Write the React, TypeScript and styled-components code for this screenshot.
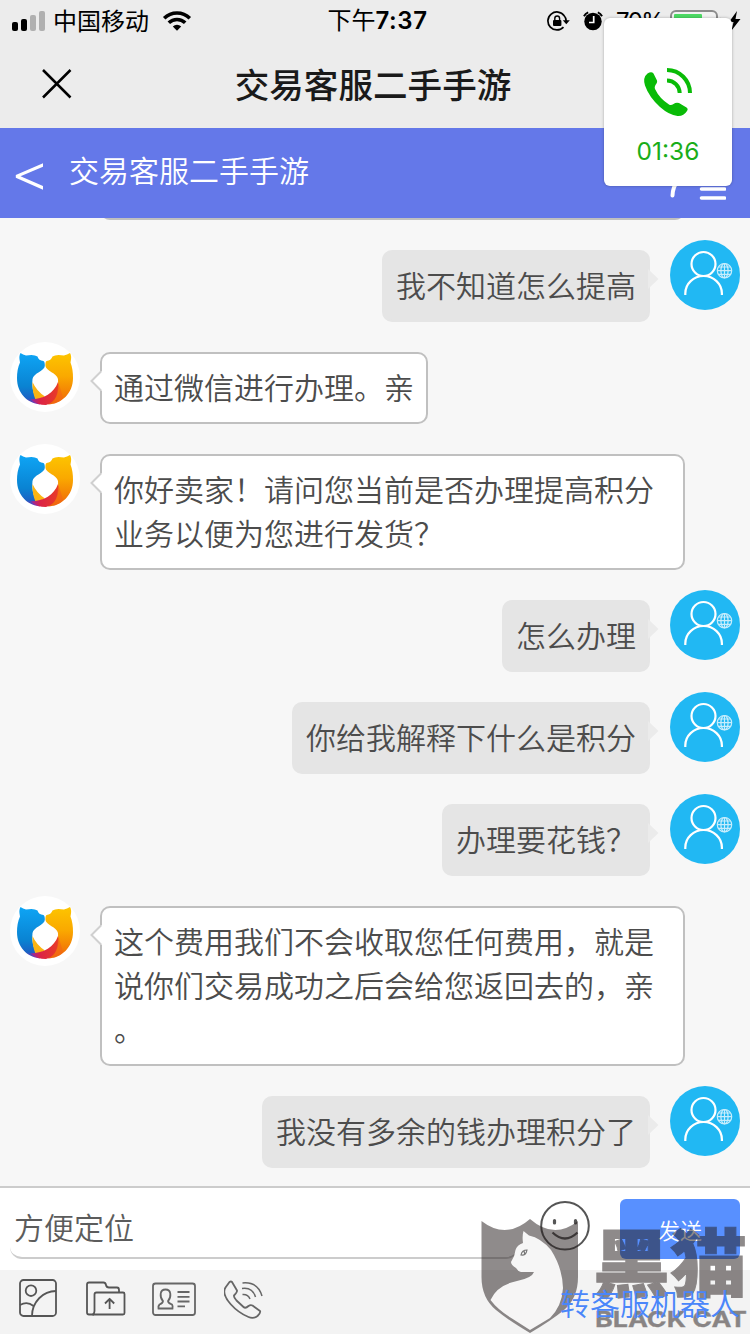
import React from "react";
import styled, { createGlobalStyle } from "styled-components";

const Global = createGlobalStyle`
  * { box-sizing: border-box; }
  body {
    margin: 0;
    font-family: Inter, "Noto Sans CJK SC", sans-serif;
    background: #f7f7f7;
  }
  svg { display: block; flex: none; }
`;

const Screen = styled.div`
  position: relative;
  width: 750px;
  height: 1334px;
  display: flex;
  flex-direction: column;
  overflow: hidden;
  background: #f7f7f7;
`;

const StatusBar = styled.div`
  height: 40px;
  flex: none;
  display: grid;
  grid-template-columns: 1fr auto 1fr;
  align-items: center;
  padding: 0 9px 0 12px;
  background: #ececec;
  color: #000;
  font-size: 24px;
  line-height: 40px;
`;

const StatusGroup = styled.div<{ $end?: boolean }>`
  display: flex;
  align-items: center;
  justify-content: ${(p) => (p.$end ? "flex-end" : "flex-start")};
`;

const Carrier = styled.span`
  margin: 0 13px 0 7px;
  padding-top: 1px;
  line-height: 39px;
`;

const Clock = styled.span`
  padding-left: 2px;
  line-height: 40px;
`;

const ClockDigits = styled.span`
  font-weight: 600;
  letter-spacing: 0.6px;
`;

const Percent = styled.span`
  width: 45px;
  margin: 2px 9px 0 13px;
  font-size: 24px;
  letter-spacing: -1.5px;
`;

const NavBar = styled.div`
  height: 88px;
  flex: none;
  display: grid;
  grid-template-columns: 72px 1fr 117px;
  align-items: center;
  padding-left: 41px;
  background: #ececec;
`;

const NavTitle = styled.h1`
  margin: 0;
  padding-top: 2px;
  text-align: center;
  font-size: 34.6px;
  font-weight: 500;
  line-height: 86px;
  color: #1a1a1a;
`;

const ChatHeader = styled.div`
  height: 90px;
  flex: none;
  display: flex;
  align-items: center;
  padding: 0 24px 0 15px;
  background: #6478e9;
  color: #fff;
`;

const HeaderTitle = styled.div`
  flex: 1;
  margin: -4px 0 0 24px;
  font-size: 30px;
  font-weight: 350;
  line-height: 44px;
`;

const Messages = styled.div`
  flex: 1;
  min-height: 0;
  overflow: hidden;
  display: flex;
  flex-direction: column;
  gap: 20px;
  padding: 0 10px;
`;

const PreviousBubble = styled.div`
  flex: none;
  width: 585px;
  height: 40px;
  margin: -38px 0 0 90px;
  border: 2px solid #c0c0c0;
  border-radius: 10px;
  background: #fff;
`;

const MessageRow = styled.div<{ $mine: boolean }>`
  flex: none;
  display: flex;
  flex-direction: ${(p) => (p.$mine ? "row-reverse" : "row")};
  align-items: flex-start;
  gap: 20px;
`;

const Bubble = styled.div<{ $mine: boolean; $wide?: boolean }>`
  position: relative;
  margin-top: 10px;
  width: ${(p) => (p.$wide ? "585px" : "auto")};
  padding: 10px 12px 14px;
  border: 2px solid ${(p) => (p.$mine ? "#e5e5e5" : "#c0c0c0")};
  border-radius: 10px;
  background: ${(p) => (p.$mine ? "#e5e5e5" : "#fff")};
  color: #4c4c4c;
  font-family: "Noto Sans CJK SC", sans-serif;
  font-size: 30px;
  font-weight: 350;
  line-height: 44px;
  white-space: pre;
`;

const Pointer = styled.svg<{ $mine: boolean }>`
  position: absolute;
  top: 16px;
  ${(p) => (p.$mine ? "right: -12px;" : "left: -12px;")}
`;

const Composer = styled.div`
  height: 84px;
  flex: none;
  display: flex;
  align-items: flex-start;
  padding: 11px 10px 0;
  border-top: 2px solid #ccc;
  background: #fff;
`;

const InputBox = styled.div`
  width: 508px;
  height: 60px;
  padding-left: 4px;
  border-bottom: 2px solid #ccc;
  border-radius: 12px;
  font-family: "Noto Sans CJK SC", sans-serif;
  font-size: 30px;
  font-weight: 350;
  line-height: 54px;
  color: #5c5c5c;
`;

const SmileButton = styled.div`
  margin: 2px 30px 0 22px;
`;

const SendButton = styled.div`
  width: 120px;
  height: 60px;
  border-radius: 6px;
  background: #5890ff;
  color: #fff;
  text-align: center;
  font-size: 22px;
  font-weight: 350;
  line-height: 64px;
`;

const ToolBar = styled.div`
  height: 64px;
  flex: none;
  display: flex;
  align-items: flex-start;
  padding: 8px 10px 0 18px;
  background: #f3f3f3;
`;

const ToolIcons = styled.div`
  flex: 1;
  display: flex;
  gap: 26px;
`;

const RobotLink = styled.div`
  position: relative;
  z-index: 3;
  font-family: "Noto Sans CJK SC", sans-serif;
  font-size: 30px;
  font-weight: 350;
  line-height: 48px;
  color: #4a86fa;
`;

const CallCard = styled.div`
  position: absolute;
  z-index: 4;
  top: 18px;
  left: 604px;
  width: 128px;
  height: 168px;
  display: flex;
  flex-direction: column;
  align-items: center;
  padding-top: 42px;
  border-radius: 6px;
  background: #fff;
  box-shadow: 0 0 3px rgba(0, 0, 0, 0.3);
`;

const CallTime = styled.div`
  margin-top: 11px;
  font-size: 24.5px;
  line-height: 32px;
  color: #1aad19;
`;

const Watermark = styled.svg`
  position: absolute;
  z-index: 2;
  left: 480px;
  top: 1214px;
`;

const Signal = () => (
  <svg width="34" height="20" viewBox="0 0 34 20">
    <rect x="0" y="11" width="6" height="9" rx="2" />
    <rect x="9" y="8" width="6" height="12" rx="2" />
    <rect x="18" y="4" width="6" height="16" rx="2" fill="#b0b0b0" />
    <rect x="27" y="0" width="6" height="20" rx="2" fill="#b0b0b0" />
  </svg>
);

const Wifi = () => (
  <svg width="30" height="20" viewBox="0 0 30 20">
    <g fill="none" stroke="#000" strokeWidth="3.6">
      <path d="M2.200 7.200a18.200 18.200 0 0 1 25.600 0" />
      <path d="M6.800 11.800a11.700 11.700 0 0 1 16.400 0" />
    </g>
    <path d="M15 19.800l-4.200-4.300a6 6 0 0 1 8.400 0z" />
  </svg>
);

const RotationLock = () => (
  <svg width="23" height="20" viewBox="0 0 23 20">
    <path d="M17.200 4.700A9 9 0 1 0 16.500 16.100" fill="none" stroke="#000" strokeWidth="1.700" />
    <path d="M17 4.500q2.200 2.200 2.300 6" fill="none" stroke="#000" strokeWidth="1.700" />
    <path d="M15.800 9.300h7l-3.500 4z" />
    <rect x="6" y="9" width="8.400" height="6" rx="1" />
    <path d="M7.800 9.500V7.400a2.400 2.400 0 0 1 4.800 0v2.100" fill="none" stroke="#000" strokeWidth="1.400" />
  </svg>
);

const AlarmIcon = styled.svg`
  margin-left: 13px;
`;

const Alarm = () => (
  <AlarmIcon width="20" height="20" viewBox="0 0 20 20">
    <circle cx="10" cy="10.500" r="8.700" />
    <path d="M1 5.200A8 8 0 0 1 5.200 1.400M19 5.200A8 8 0 0 0 14.800 1.400" fill="none" stroke="#000" strokeWidth="2" />
    <path d="M10.700 5v6.500H6" fill="none" stroke="#fff" strokeWidth="1.700" />
  </AlarmIcon>
);

const Battery = () => (
  <svg width="71" height="24" viewBox="0 0 71 24">
    <rect x="1" y="2" width="46" height="20" rx="5" fill="#fff" fillOpacity=".3" stroke="#8c8c8c" strokeWidth="2" />
    <rect x="4" y="5" width="28" height="14" rx="1" fill="#4cd964" />
    <path d="M50 8.500q3 3.500 0 7z" fill="#8c8c8c" />
    <path d="M67 2L59 13h4.500L61.500 21.500 70.500 10h-5z" />
  </svg>
);

const Close = () => (
  <svg width="32" height="32" viewBox="0 0 32 32" fill="none" stroke="#000" strokeWidth="2.500">
    <path d="M2 2l27.500 27.500M29.500 2L2 29.500" />
  </svg>
);

const BackIcon = styled.svg`
  margin-top: 7px;
`;

const Back = () => (
  <BackIcon width="30" height="30" viewBox="0 0 30 30" fill="#fff">
    <path d="M28 1.200v3.600L5.500 14.300 28 24v3.800L.8 15.700v-2.800z" />
  </BackIcon>
);

const HeaderToolsIcon = styled.svg`
  margin-top: 28px;
`;

const HeaderTools = () => (
  <HeaderToolsIcon width="58" height="34" viewBox="0 0 58 34" fill="none" stroke="#fff" strokeLinecap="round">
    <path d="M4.500 25.500C5 14 12 5 24 4" strokeWidth="4" />
    <path d="M33.500 10h23M33.500 19h23M33.500 28h23" strokeWidth="3.600" />
  </HeaderToolsIcon>
);

const AgentAvatar = () => (
  <svg width="70" height="70" viewBox="0 0 70 70">
    <defs>
      <linearGradient id="agentBlue" x1="0" y1="0" x2="0" y2="1">
        <stop offset="0" stopColor="#0ea5f5" />
        <stop offset=".65" stopColor="#0a83d2" />
        <stop offset=".88" stopColor="#1b62c4" />
        <stop offset="1" stopColor="#922ab0" />
      </linearGradient>
      <linearGradient id="agentGold" x1="0" y1="0" x2="0" y2="1">
        <stop offset="0" stopColor="#fdc500" />
        <stop offset=".45" stopColor="#faa900" />
        <stop offset="1" stopColor="#ef6508" />
      </linearGradient>
      <linearGradient id="agentRed" x1="0" y1="0" x2="1" y2="0">
        <stop offset="0" stopColor="#8d28ac" />
        <stop offset=".35" stopColor="#db2346" />
        <stop offset="1" stopColor="#e93c26" />
      </linearGradient>
    </defs>
    <circle cx="35" cy="35" r="35" fill="#fff" />
    <path d="M10.500 11Q13 12.500 16 13.500Q24 12 27.500 14.500Q28.500 18.500 33.500 19Q35 20 34.800 24C34.500 29 23.500 31 22.500 37C21.500 47 24 54 30 62.500C17 61 7 51 7 36Q7 27 10 20.500Q8.500 14 10.500 11z" fill="url(#agentBlue)" />
    <path d="M60 11Q57 12.500 54 13.500Q46 12 42.500 14.500Q41 18.500 36.500 19Q35.200 20 35.500 24C36 29 47 31 48 37C49 49 44 56 38 62.500C52 62 63 51 63 36Q63 27 60.500 20.500Q62 14 60 11z" fill="url(#agentGold)" />
    <path d="M22.500 40Q26.500 49 35 54.500L26 59Q22 50 22.500 40z" fill="#fbb413" />
    <path d="M48 40C44 51 34 57 20.500 57.500Q27 63 36 63C46 61 50 49 48 40z" fill="url(#agentRed)" />
    <path d="M48 40C48 50 46 57 42 62Q49 60 53 56Q51 48 48 40z" fill="#f2641a" opacity=".55" />
  </svg>
);

const UserAvatar = () => (
  <svg width="70" height="70" viewBox="0 0 70 70" fill="none" stroke="#fff">
    <circle cx="35" cy="35" r="35" fill="#21b8f3" stroke="none" />
    <circle cx="33.500" cy="24" r="12" strokeWidth="2.200" />
    <path d="M15.300 55V53.500a18.300 17.500 0 0 1 36.600 0v1.500" strokeWidth="2.200" />
    <g strokeWidth="1.200" opacity=".75">
      <circle cx="54.500" cy="30.700" r="7.200" />
      <ellipse cx="54.500" cy="30.700" rx="3.600" ry="7.200" />
      <path d="M54.500 23.500v14.400M47.300 30.700h14.400M48.500 27h12M48.500 34.400h12" />
    </g>
  </svg>
);

const Smile = () => (
  <svg width="50" height="50" viewBox="0 0 50 50" fill="none" stroke="#555" strokeWidth="2">
    <circle cx="25" cy="24.800" r="23.800" />
    <path d="M12.500 31.500q12.500 12 25 0" strokeWidth="2.200" />
    <path d="M14.500 19.500v2.500M35.500 19.500v2.500" strokeWidth="3.200" strokeLinecap="round" />
  </svg>
);

const Picture = () => (
  <svg width="40" height="40" viewBox="0 0 40 40" fill="none" stroke="#555" strokeWidth="1.800">
    <rect x="2" y="2" width="36" height="36" rx="3.500" />
    <circle cx="13" cy="12.700" r="5.300" />
    <path d="M14 38C14 24 25 13 38 13M2 27C7 24 12 25 15.500 28" />
  </svg>
);

const Folder = () => (
  <svg width="42" height="40" viewBox="0 0 42 40" fill="none" stroke="#555" strokeWidth="1.800" strokeLinejoin="round">
    <path d="M10 36.500H5Q3 36.500 3 34.500V6.500Q3 4.500 5 4.500H19.500Q21.500 4.500 22 7Q22.500 9.500 25 9.500H33Q35 9.500 35 12V14" />
    <path d="M12.500 14.500H39Q40.500 14.500 40.500 16V35Q40.500 36.500 39 36.500H9Q10.500 35 10.500 33V16.500Q10.500 14.500 12.500 14.500z" />
    <path d="M25.600 31V21M21 25.500l4.600-4.700 4.600 4.700" />
  </svg>
);

const IdCard = () => (
  <svg width="46" height="40" viewBox="0 0 46 40" fill="none" stroke="#666" strokeWidth="1.800">
    <rect x="1" y="5.500" width="42" height="31.500" rx="2.500" />
    <path d="M11 23C7.500 19 7.500 11.500 13.500 11.500S19.500 19 16 23Q16 25 20 26.500Q21 28 20.500 30.500H6.500Q6 28 7.500 26.500Q11 25 11 23z" />
    <path d="M25.500 14H37.500M25.500 18.800H37.500M25.500 23.500H37.500M25.500 28.300H33" />
  </svg>
);

const Phone = () => (
  <svg width="42" height="42" viewBox="0 0 42 42" fill="none" stroke="#666" strokeWidth="1.800" strokeLinejoin="round">
    <g transform="translate(-1.500 0)">
      <path d="M3 9.500L7 4Q8.500 3 9.500 4L14.500 12.500Q15 14 11.500 17.500Q11 19 14 22.500L21 29Q23 31 26 28Q28 26.500 30 27.500L37.500 33Q38.500 34.500 35 38Q31 41 26 39Q16 35 8 26Q-1 15.500 3 9.500z" />
      <path d="M20 16.500Q25.500 16 27.500 21M19.500 10.500Q30 9 33 19M20 5Q35 3.500 39.500 18" strokeWidth="1.500" />
    </g>
  </svg>
);

const ActiveCall = () => (
  <svg width="64" height="64" viewBox="0 0 64 64">
    <path d="M11.500 13.500Q15.500 11 17.500 13.500L21 20.500Q21.500 22 20.500 23.500Q18 26.500 19 29Q23.500 38.500 33 44.500Q35 45.800 37.500 44Q40 42 43 43L50.500 47.500Q52.500 49 51 51Q47.500 56.500 41.500 56Q33 55 24 47Q13 37 9 25.500Q6.500 17.500 11.500 13.500z" fill="#09bb07" />
    <path d="M31 10a23 23 0 0 1 23 23M31 20.500a12.700 12.700 0 0 1 12.700 12.500" fill="none" stroke="#09bb07" strokeWidth="4" />
  </svg>
);

const BlackCatMark = () => (
  <Watermark width="270" height="120" viewBox="0 0 270 120">
    <path d="M1.500 7Q26 26 50 5Q74 26 98 7V63Q98 84 84 96Q72 106 50 119Q28 106 16 96Q1.500 84 1.500 63z" fill="#241c1c" opacity=".51" />
    <path d="M43.500 17L49 21.500Q61 24 71 36Q82.500 54 83 74Q82 92 70 104Q60 110 50 116L32 104.500Q18 96 10.500 86Q17 71 37 67Q52 64 54 58H41Q38 57.500 36 54Q31 51 31 48Q35 42 35.500 36Q37 31 43 29Q42 22 43.500 17z" fill="#fff" opacity=".92" />
    <path d="M41 41q1-5 6-5q-1 6-6 5zM44 37l1 4" fill="none" stroke="#777" strokeWidth="1.200" />
    <g fill="#241c1c" opacity=".51" stroke="#241c1c">
      <text x="113" y="77" fontSize="74" fontWeight="900" fontFamily="Noto Sans CJK SC, sans-serif" textLength="154" lengthAdjust="spacingAndGlyphs" strokeWidth="1">黑猫</text>
      <text x="115" y="112.500" fontSize="22" fontWeight="700" fontFamily="Inter, sans-serif" textLength="152" lengthAdjust="spacingAndGlyphs" strokeWidth=".3">BLACK CAT</text>
    </g>
  </Watermark>
);

type Message = { mine: boolean; text: string; wide?: boolean };

const messages: Message[] = [
  { mine: true, text: "我不知道怎么提高" },
  { mine: false, text: "通过微信进行办理。亲" },
  { mine: false, wide: true, text: "你好卖家！请问您当前是否办理提高积分\n业务以便为您进行发货？" },
  { mine: true, text: "怎么办理" },
  { mine: true, text: "你给我解释下什么是积分" },
  { mine: true, text: "办理要花钱？" },
  { mine: false, wide: true, text: "这个费用我们不会收取您任何费用，就是\n说你们交易成功之后会给您返回去的，亲\n。" },
  { mine: true, text: "我没有多余的钱办理积分了" },
];

const ChatMessage = ({ mine, text, wide }: Message) => (
  <MessageRow $mine={mine}>
    {mine ? <UserAvatar /> : <AgentAvatar />}
    <Bubble $mine={mine} $wide={wide}>
      {text}
      <Pointer $mine={mine} width="12" height="22" viewBox="0 0 12 22">
        {mine ? (
          <path d="M0 1l10.500 10L0 21z" fill="#ebebeb" />
        ) : (
          <>
            <path d="M12 1L1.500 11 12 21z" fill="#fff" />
            <path d="M11 1.500L1.500 11l9.500 9.500" fill="none" stroke="#d0d0d0" strokeWidth="2" />
          </>
        )}
      </Pointer>
    </Bubble>
  </MessageRow>
);

export default function App() {
  return (
    <Screen>
      <Global />
      <StatusBar>
        <StatusGroup>
          <Signal />
          <Carrier>中国移动</Carrier>
          <Wifi />
        </StatusGroup>
        <Clock>
          下午<ClockDigits>7:37</ClockDigits>
        </Clock>
        <StatusGroup $end>
          <RotationLock />
          <Alarm />
          <Percent>70%</Percent>
          <Battery />
        </StatusGroup>
      </StatusBar>
      <NavBar>
        <Close />
        <NavTitle>交易客服二手手游</NavTitle>
      </NavBar>
      <ChatHeader>
        <Back />
        <HeaderTitle>交易客服二手手游</HeaderTitle>
        <HeaderTools />
      </ChatHeader>
      <Messages>
        <PreviousBubble />
        {messages.map((m) => (
          <ChatMessage key={m.text} {...m} />
        ))}
      </Messages>
      <Composer>
        <InputBox>方便定位</InputBox>
        <SmileButton>
          <Smile />
        </SmileButton>
        <SendButton>发送</SendButton>
      </Composer>
      <ToolBar>
        <ToolIcons>
          <Picture />
          <Folder />
          <IdCard />
          <Phone />
        </ToolIcons>
        <RobotLink>转客服机器人</RobotLink>
      </ToolBar>
      <BlackCatMark />
      <CallCard>
        <ActiveCall />
        <CallTime>01:36</CallTime>
      </CallCard>
    </Screen>
  );
}
